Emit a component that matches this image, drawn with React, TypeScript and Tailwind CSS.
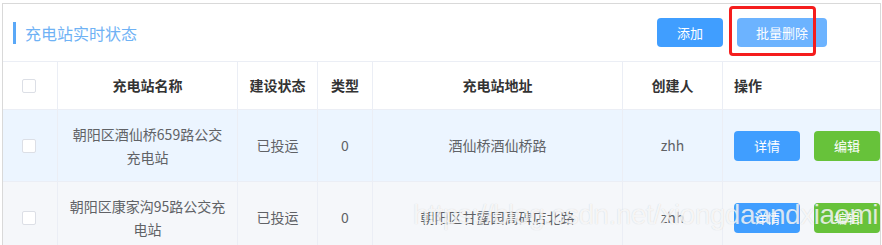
import React from 'react';

const COLS = 'grid grid-cols-[55px_180px_80px_55px_250px_100px_230px]';

const ROWS = [
    { name: '朝阳区酒仙桥659路公交充电站', status: '已投运', type: '0', addr: '酒仙桥酒仙桥路', creator: 'zhh', bg: 'bg-[#ecf5ff]' },
    { name: '朝阳区康家沟95路公交充电站', status: '已投运', type: '0', addr: '朝阳区甘露园高碑店北路', creator: 'zhh', bg: 'bg-[#f5f7fa]' },
];

function Checkbox() {
    return <span className="block w-[14px] h-[14px] bg-white border border-[#dcdfe6] rounded-[2px]" />;
}

export default function App() {
    const cell = 'border-r border-b border-[#ebeef5] flex items-center';

    return (
        <div className="relative w-[882px] h-[245px] bg-white overflow-hidden pt-[3px] pl-[2px] font-['Noto_Sans_CJK_SC',sans-serif]">
            <div className="w-[879px] h-[260px] border border-[#d9d9d9] overflow-hidden">
                {/* title bar */}
                <div className="h-[58px] flex items-center border-b border-[#ebeef5] pl-[10px] pr-[53px]">
                    <span className="w-[3px] h-[22px] bg-[#5aa8f7]" />
                    <span className="ml-[9px] text-[16px] text-[#6fb2f5] leading-none">充电站实时状态</span>
                    <div className="ml-auto flex gap-[14px]">
                        <button className="w-[66px] h-[29px] rounded-[4px] bg-[#409eff] text-white text-[13px]">添加</button>
                        <button className="w-[90px] h-[29px] rounded-[4px] bg-[#6cb3ff] text-white text-[13px]">批量删除</button>
                    </div>
                </div>

                {/* table header */}
                <div className={`${COLS} h-[48px] text-[14px] font-bold text-[#333]`}>
                    <div className={`${cell} pl-[19px]`}><Checkbox /></div>
                    <div className={`${cell} justify-center`}>充电站名称</div>
                    <div className={`${cell} justify-center`}>建设状态</div>
                    <div className={`${cell} justify-center`}>类型</div>
                    <div className={`${cell} justify-center`}>充电站地址</div>
                    <div className={`${cell} justify-center`}>创建人</div>
                    <div className={`${cell} pl-[11px]`}>操作</div>
                </div>

                {/* rows */}
                {ROWS.map(row => (
                    <div key={row.name} className={`${COLS} h-[72px] text-[14px] text-[#606266] leading-[23px] ${row.bg}`}>
                        <div className={`${cell} pl-[19px]`}><Checkbox /></div>
                        <div className={`${cell} justify-center px-[10px] text-center`}>{row.name}</div>
                        <div className={`${cell} justify-center`}>{row.status}</div>
                        <div className={`${cell} justify-center`}>{row.type}</div>
                        <div className={`${cell} justify-center`}>{row.addr}</div>
                        <div className={`${cell} justify-center`}>{row.creator}</div>
                        <div className={`${cell} pl-[11px] gap-[14px]`}>
                            <button className="w-[66px] h-[30px] rounded-[4px] bg-[#409eff] text-white text-[13px]">详情</button>
                            <button className="w-[66px] h-[30px] rounded-[4px] bg-[#67c23a] text-white text-[13px]">编辑</button>
                        </div>
                    </div>
                ))}
            </div>

            {/* red annotation box */}
            <div className="absolute left-[729px] top-[6px] w-[87px] h-[50px] border-[3px] border-[#f51d1d] rounded-[4px]" />

            {/* watermark */}
            <div className="absolute left-[413px] top-[201px] text-[28px] leading-none tracking-[-0.5px] text-white/80 font-['Liberation_Sans',sans-serif] [text-shadow:0_0_1px_rgba(0,0,0,0.18)] whitespace-nowrap">
                https://blog.csdn.net/xiongdaandxiaomi
            </div>
        </div>
    );
}
